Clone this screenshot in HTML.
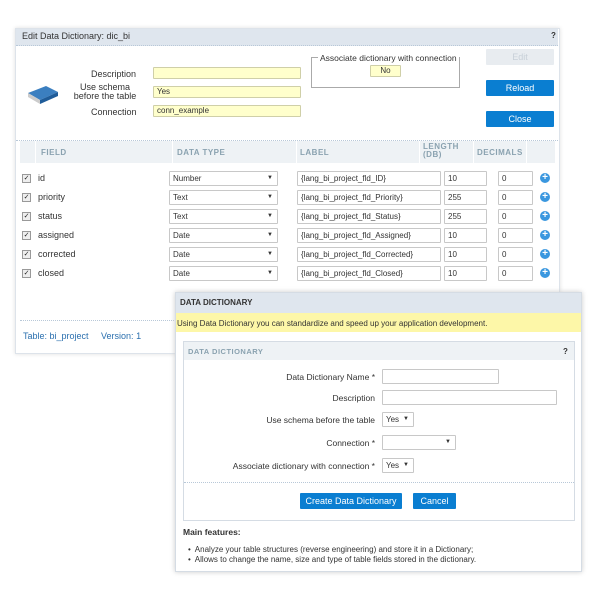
<!DOCTYPE html><html><head><style>
body{margin:0;width:600px;height:600px;background:#fff;font-family:"Liberation Sans",Arial,sans-serif;font-size:9px;color:#333;position:relative;overflow:hidden}
.a{position:absolute}
.inp{position:absolute;border:1px solid #c8c8c8;background:#fff;box-sizing:border-box;height:15px;font-size:8px;line-height:13px;padding-left:3px;border-radius:1px}
.y{background:#ffffcc;border-color:#cfcfa8}
.sel:after{content:"▼";position:absolute;right:4px;top:0;font-size:6px}
.btn{position:absolute;background:#0a7ed1;color:#fff;text-align:center;font-size:9px;border-radius:1px}
.cb{position:absolute;width:7px;height:7px;border:1px solid #999;background:#eee;font-size:7px;line-height:7px;text-align:center;color:#222}
.plus{position:absolute;width:10px;height:10px;border-radius:50%;background:#3a97df;color:#fff;font-size:10px;line-height:10px;text-align:center;font-weight:bold}
.hd{position:absolute;color:#8aa2b0;font-size:8px;font-weight:bold;letter-spacing:.5px}
</style></head><body>
<div class="a" style="left:15px;top:28px;width:543px;height:324px;border:1px solid #dde3ea;box-shadow:0 0 4px #ddd;background:#fff"></div>
<div class="a" style="left:16px;top:29px;width:542px;height:16px;background:#dfe6ee;border-bottom:1px dotted #b8c8d8"></div>
<div class="a" style="left:22px;top:31px;font-size:9px;color:#333">Edit Data Dictionary: dic_bi</div>
<div class="a" style="left:551px;top:31px;font-size:8px;font-weight:bold">?</div>
<svg class="a" style="left:26px;top:83px" width="34" height="22"><polygon points="2,10 20,3 32,9 14,17" fill="#3b7fc0"/><polygon points="2,10 14,17 14,21 2,14" fill="#ccc"/><polygon points="14,17 32,9 32,13 14,21" fill="#1f5c99"/></svg>
<div class="a" style="left:91px;top:69px">Description</div>
<div class="a" style="left:84px;top:83px;text-align:center;line-height:9px;width:70px;margin-left:-14px">Use schema<br>before the table</div>
<div class="a" style="left:91px;top:107px">Connection</div>
<div class="inp y" style="left:153px;top:67px;width:148px;height:12px"></div>
<div class="inp y" style="left:153px;top:86px;width:148px;height:12px;line-height:10px">Yes</div>
<div class="inp y" style="left:153px;top:105px;width:148px;height:12px;line-height:10px">conn_example</div>
<div class="a" style="left:311px;top:57px;width:147px;height:29px;border:1px solid #aaa"></div>
<div class="a" style="left:318px;top:53px;background:#fff;padding:0 2px;font-size:8.5px">Associate dictionary with connection</div>
<div class="inp y" style="left:370px;top:65px;width:31px;height:12px;line-height:10px;text-align:center;padding:0">No</div>
<div class="btn" style="left:486px;top:49px;width:68px;height:16px;line-height:16px;background:#e8ecf0;color:#c8d0d8">Edit</div>
<div class="btn" style="left:486px;top:80px;width:68px;height:16px;line-height:16px">Reload</div>
<div class="btn" style="left:486px;top:111px;width:68px;height:16px;line-height:16px">Close</div>
<div class="a" style="left:16px;top:140px;width:542px;border-top:1px dotted #b8c8d8"></div>
<div class="a" style="left:20px;top:141px;width:535px;height:22px;background:#eef2f5"></div>
<div class="a" style="left:35px;top:141px;width:1px;height:22px;background:#fff"></div>
<div class="a" style="left:172px;top:141px;width:1px;height:22px;background:#fff"></div>
<div class="a" style="left:296px;top:141px;width:1px;height:22px;background:#fff"></div>
<div class="a" style="left:419px;top:141px;width:1px;height:22px;background:#fff"></div>
<div class="a" style="left:473px;top:141px;width:1px;height:22px;background:#fff"></div>
<div class="a" style="left:526px;top:141px;width:1px;height:22px;background:#fff"></div>
<div class="hd" style="left:41px;top:148px">FIELD</div>
<div class="hd" style="left:177px;top:148px">DATA TYPE</div>
<div class="hd" style="left:300px;top:148px">LABEL</div>
<div class="hd" style="left:423px;top:143px;line-height:8px">LENGTH<br>(DB)</div>
<div class="hd" style="left:477px;top:148px">DECIMALS</div>

<div class="cb" style="left:22px;top:174px">✓</div><div class="a" style="left:38px;top:173px">id</div><div class="inp sel" style="left:169px;top:171px;width:109px">Number</div><div class="inp" style="left:297px;top:171px;width:144px">{lang_bi_project_fld_ID}</div><div class="inp" style="left:444px;top:171px;width:43px">10</div><div class="inp" style="left:498px;top:171px;width:35px">0</div><div class="plus" style="left:540px;top:173px">+</div>
<div class="cb" style="left:22px;top:193px">✓</div><div class="a" style="left:38px;top:192px">priority</div><div class="inp sel" style="left:169px;top:190px;width:109px">Text</div><div class="inp" style="left:297px;top:190px;width:144px">{lang_bi_project_fld_Priority}</div><div class="inp" style="left:444px;top:190px;width:43px">255</div><div class="inp" style="left:498px;top:190px;width:35px">0</div><div class="plus" style="left:540px;top:192px">+</div>
<div class="cb" style="left:22px;top:212px">✓</div><div class="a" style="left:38px;top:211px">status</div><div class="inp sel" style="left:169px;top:209px;width:109px">Text</div><div class="inp" style="left:297px;top:209px;width:144px">{lang_bi_project_fld_Status}</div><div class="inp" style="left:444px;top:209px;width:43px">255</div><div class="inp" style="left:498px;top:209px;width:35px">0</div><div class="plus" style="left:540px;top:211px">+</div>
<div class="cb" style="left:22px;top:231px">✓</div><div class="a" style="left:38px;top:230px">assigned</div><div class="inp sel" style="left:169px;top:228px;width:109px">Date</div><div class="inp" style="left:297px;top:228px;width:144px">{lang_bi_project_fld_Assigned}</div><div class="inp" style="left:444px;top:228px;width:43px">10</div><div class="inp" style="left:498px;top:228px;width:35px">0</div><div class="plus" style="left:540px;top:230px">+</div>
<div class="cb" style="left:22px;top:250px">✓</div><div class="a" style="left:38px;top:249px">corrected</div><div class="inp sel" style="left:169px;top:247px;width:109px">Date</div><div class="inp" style="left:297px;top:247px;width:144px">{lang_bi_project_fld_Corrected}</div><div class="inp" style="left:444px;top:247px;width:43px">10</div><div class="inp" style="left:498px;top:247px;width:35px">0</div><div class="plus" style="left:540px;top:249px">+</div>
<div class="cb" style="left:22px;top:269px">✓</div><div class="a" style="left:38px;top:268px">closed</div><div class="inp sel" style="left:169px;top:266px;width:109px">Date</div><div class="inp" style="left:297px;top:266px;width:144px">{lang_bi_project_fld_Closed}</div><div class="inp" style="left:444px;top:266px;width:43px">10</div><div class="inp" style="left:498px;top:266px;width:35px">0</div><div class="plus" style="left:540px;top:268px">+</div>

<div class="a" style="left:20px;top:320px;width:160px;border-top:1px dotted #b8c8d8"></div>
<div class="a" style="left:23px;top:331px;color:#2a6fae">Table: bi_project &nbsp;&nbsp;&nbsp; Version: 1</div>

<div class="a" style="left:175px;top:292px;width:405px;height:278px;border:1px solid #d5dce4;box-shadow:0 0 5px #ccc;background:#fff"></div>
<div class="a" style="left:176px;top:293px;width:405px;height:20px;background:#dfe6ee"></div>
<div class="a" style="left:180px;top:298px;font-size:8px;font-weight:bold">DATA DICTIONARY</div>
<div class="a" style="left:176px;top:313px;width:405px;height:19px;background:#fdf7a8"></div>
<div class="a" style="left:177px;top:319px;font-size:8px">Using Data Dictionary you can standardize and speed up your application development.</div>
<div class="a" style="left:183px;top:341px;width:390px;height:178px;border:1px solid #d5dce4"></div>
<div class="a" style="left:184px;top:342px;width:390px;height:18px;background:#eef2f5"></div>
<div class="hd" style="left:188px;top:347px;font-size:7.5px">DATA DICTIONARY</div>
<div class="a" style="left:563px;top:347px;font-size:8px;font-weight:bold">?</div>
<div class="a" style="left:200px;top:372px;width:175px;text-align:right;font-size:8.5px">Data Dictionary Name *</div>
<div class="a" style="left:200px;top:393px;width:175px;text-align:right;font-size:8.5px">Description</div>
<div class="a" style="left:200px;top:415px;width:175px;text-align:right;font-size:8.5px">Use schema before the table</div>
<div class="a" style="left:200px;top:438px;width:175px;text-align:right;font-size:8.5px">Connection *</div>
<div class="a" style="left:200px;top:461px;width:175px;text-align:right;font-size:8.5px">Associate dictionary with connection *</div>
<div class="inp" style="left:382px;top:369px;width:117px"></div>
<div class="inp" style="left:382px;top:390px;width:175px"></div>
<div class="inp sel" style="left:382px;top:412px;width:32px;height:15px">Yes</div>
<div class="inp sel" style="left:382px;top:435px;width:74px;height:15px"></div>
<div class="inp sel" style="left:382px;top:458px;width:32px;height:15px">Yes</div>
<div class="a" style="left:184px;top:482px;width:390px;border-top:1px dotted #b8c8d8"></div>
<div class="btn" style="left:300px;top:493px;width:102px;height:16px;line-height:16px">Create Data Dictionary</div>
<div class="btn" style="left:413px;top:493px;width:43px;height:16px;line-height:16px">Cancel</div>
<div class="a" style="left:183px;top:527px;font-weight:bold;font-size:8.5px">Main features:</div>
<div class="a" style="left:188px;top:545px;font-size:8px;line-height:10px">•&nbsp; Analyze your table structures (reverse engineering) and store it in a Dictionary;<br>•&nbsp; Allows to change the name, size and type of table fields stored in the dictionary.</div>
</body></html>
